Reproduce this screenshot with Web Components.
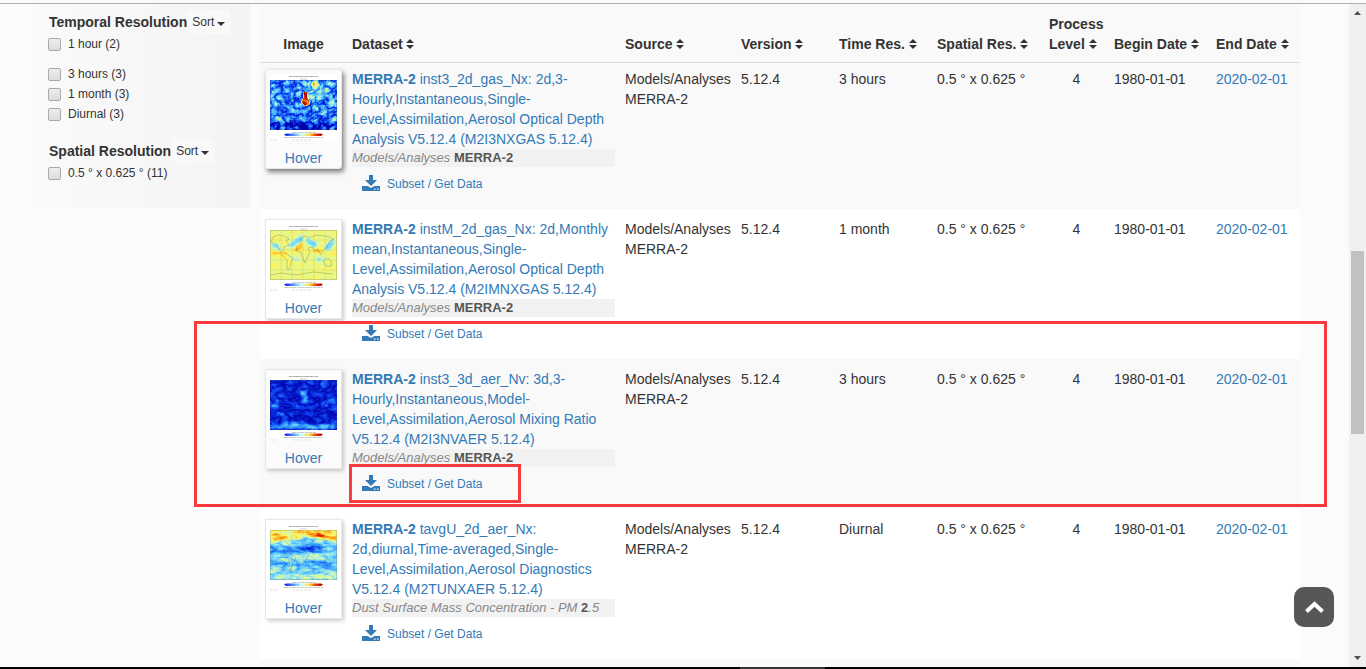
<!DOCTYPE html>
<html lang="en">
<head>
<meta charset="utf-8">
<title>Datasets</title>
<style>
  html, body {
    height: 100%;
    margin: 0;
  }
  body {
    font-family: "Liberation Sans", Arial, sans-serif;
    font-size: 14px;
    line-height: 20px;
    color: #333;
    background: #fbfbfb;
    overflow: hidden;
  }
</style>
</head>
<body>
<search-page>
  <facet-panel slot="side">
    <facet-group heading="Temporal Resolution">
      <facet-option class="picked" name="1 hour" count="2"></facet-option>
      <facet-option name="3 hours" count="3"></facet-option>
      <facet-option name="1 month" count="3"></facet-option>
      <facet-option name="Diurnal" count="3"></facet-option>
    </facet-group>
    <facet-group heading="Spatial Resolution">
      <facet-option name="0.5 ° x 0.625 °" count="11"></facet-option>
    </facet-group>
  </facet-panel>
  <dataset-table></dataset-table>
  <mark-box slot="over" style="--x: 194px; --y: 321px; --w: 1133px; --h: 186px"></mark-box>
  <mark-box slot="over" style="--x: 349px; --y: 464px; --w: 172px; --h: 39px"></mark-box>
  <top-button slot="over"></top-button>
</search-page>

<script>
function define(name, html, setup) {
  const template = document.createElement('template');
  template.innerHTML = html;
  customElements.define(name, class extends HTMLElement {
    constructor() {
      super();
      this.attachShadow({ mode: 'open' });
      this.shadowRoot.appendChild(template.content.cloneNode(true));
    }
    connectedCallback() {
      if (setup) setup(this.shadowRoot, this);
    }
  });
}

define('search-page', `
  <style>
    :host {
      display: flex;
      flex-direction: column;
      position: relative;
      box-sizing: border-box;
      height: 100vh;
      padding-top: 3px;
    }
    .view {
      display: flex;
      flex: 1;
      min-height: 0;
      border-top: 1px solid #acacac;
    }
    main {
      display: flex;
      flex: 1;
      gap: 10px;
      min-width: 0;
      padding: 0 49px 0 37px;
      overflow: hidden;
    }
    footer {
      display: flex;
      height: 2px;
      background: #000;
    }
    footer::before { content: ""; flex: 740; }
    footer::after { content: ""; flex: 541; }
    footer i { flex: 85; background: #333; }
  </style>
  <div class="view">
    <main>
      <slot name="side"></slot>
      <slot></slot>
    </main>
    <scroll-bar></scroll-bar>
  </div>
  <footer><i></i></footer>
  <slot name="over"></slot>
`);

define('scroll-bar', `
  <style>
    :host {
      display: flex;
      flex-direction: column;
      width: 17px;
      background: #f0f0f0;
    }
    svg { display: block; }
    .before { flex: 230; }
    .thumb { flex: 183; margin: 0 2px; background: #c1c1c1; }
    .after { flex: 216; }
  </style>
  <svg width="17" height="17"><path d="M5 11h7L8.500 7z" fill="#505050"/></svg>
  <div class="before"></div>
  <div class="thumb"></div>
  <div class="after"></div>
  <svg width="17" height="17"><path d="M5 6h7L8.500 10z" fill="#505050"/></svg>
`);

define('facet-panel', `
  <style>
    :host {
      display: flex;
      flex-direction: column;
      align-self: flex-start;
      flex: none;
      gap: 15px;
      box-sizing: border-box;
      width: 213px;
      padding: 6px 0 25px 11px;
      background: linear-gradient(to right, #fafafa, #f4f4f4);
    }
  </style>
  <slot></slot>
`);

define('facet-group', `
  <style>
    :host { display: block; }
    header {
      display: flex;
      align-items: center;
      height: 24px;
    }
    h4 {
      margin: 0;
      padding-left: 1px;
      font-size: 14px;
      line-height: 20px;
    }
    button {
      display: flex;
      align-items: center;
      gap: 3px;
      height: 24px;
      padding: 0 5px;
      border: 0;
      border-radius: 3px;
      background: #f9f9f9;
      color: #333;
      font: 12px/18px "Liberation Sans", Arial, sans-serif;
    }
    i {
      margin-top: 3px;
      border: 4px solid transparent;
      border-top-color: #333;
      border-bottom: 0;
    }
  </style>
  <header><h4></h4><button type="button">Sort<i></i></button></header>
  <slot></slot>
`, (root, el) => {
  root.querySelector('h4').textContent = el.getAttribute('heading');
});

define('facet-option', `
  <style>
    :host { display: block; }
    :host(.picked) { margin-bottom: 10px; }
    label {
      display: flex;
      align-items: center;
      gap: 7px;
      height: 20px;
      font-size: 12px;
    }
    input {
      appearance: none;
      width: 13px;
      height: 13px;
      margin: 0;
      border: 1px solid #a9a9a9;
      border-radius: 2px;
      background: linear-gradient(#eee, #dcdcdc);
    }
  </style>
  <label><input type="checkbox"><span></span></label>
`, (root, el) => {
  root.querySelector('span').textContent = el.getAttribute('name') + ' (' + el.getAttribute('count') + ')';
});

define('sort-icon', `
  <style>
    :host { display: inline-block; width: 8px; height: 10px; }
    svg { display: block; }
  </style>
  <svg width="8" height="10" fill="#333"><path d="M0 4L4 0l4 4zM0 6h8l-4 4z"/></svg>
`);

// Grey level = data value; the filter adds noise and maps it to the colour scale.
const maps = {
  gas: {
    noise: '.12 .14', gain: .8,
    art: `<rect width="67" height="50" fill="#282828"/>
      <g filter="url(#soft)">
        <path d="M33 5q8-5 19 0t3 13-19 2z" fill="#4c4c4c"/>
        <path d="M36 4q9-3 14 2t-3 9" fill="none" stroke="#727272" stroke-width="2"/>
        <path d="M17 10q6 1 5 12" fill="none" stroke="#606060" stroke-width="2"/>
        <path d="M0 43h67v8H0z" fill="#000"/>
      </g>
      <path d="M34 12l3 0 0 6 3 3-1 4-4 1-4-4 2-3z" fill="#d8d8d8" filter="url(#edge)"/>`,
    coast: ''
  },
  month: {
    noise: '.08 .2', gain: .12,
    art: `<rect width="67" height="50" fill="#929292"/>
      <g filter="url(#soft)">
        <path d="M17 16q8-7 14-11l3 5-13 8zM37 7l11 6-3 7-9-8zM54 18l7-9 5 2-8 11zM0 13l9 1 3 7-10-4z" fill="#606060"/>
        <path d="M22 21l10-9 2 5-9 6zM0 22h18v3H0zM40 21l7-3 8 2-8 3zM54 24l12-2v3z" fill="#b0b0b0"/>
        <path d="M20 27l11 1-4 3zM45 26l11 2-8 4z" fill="#686868"/>
      </g>`,
    coast: 'M3 7l5-2 6 1 5 3-3 2 3 4-5 2-1 4 5 4 5 3-2 5-2 7-2-1 0-9-4-4-4-7-3-5-5-2zM31 8l4-2 4 2 7-3 10 1 8 3-5 3-2 5-4 3-2 5-3-5-4 0-2-3-4 1 2 4-3 6-2 5-3-7-1-4-5-1 1-5 4-2zM53 31l5-3 4 4-1 4-5 0zM1 45l10-2 15 2 17-3 20 2'
  },
  aer: {
    noise: '.1 .16', gain: .35,
    art: `<rect width="67" height="50" fill="#0c0c0c"/>
      <g filter="url(#soft)">
        <path d="M28 9l8 4 2 7-7-3zM54 22l10-5 3 5zM0 24l9 0 0 3H0zM24 42l20 3 20-1v5H0l8-4z" fill="#404040"/>
        <path d="M33 19l4-1-2 5z" fill="#707070"/>
      </g>`,
    coast: ''
  },
  diurnal: {
    noise: '.07 .18', gain: .45,
    art: `<rect width="67" height="50" fill="#585858"/>
      <g filter="url(#soft)">
        <path d="M-2-2h71v12l-17-2-9-4-9 3-14 4-22 1z" fill="#949494"/>
        <path d="M34 2h15l10 4 8 0v5l-17-3-12-1z" fill="#c4c4c4"/>
        <path d="M2 5h15v3H2z" fill="#aaa"/>
        <path d="M0 15l16 2 14 0 14-2 10 2 3 4-14 3-16-1-27 1z" fill="#343434"/>
        <path d="M30 18l20-1 3 3-22 1z" fill="#080808"/>
        <path d="M21 24l14 2 11-1 10 3-9 2-15-2-10 1z" fill="#848484"/>
        <path d="M0 31l18 0 16 5 27 0v2l-31 0-30-4zM34 30h20l12 4-17 1z" fill="#3c3c3c"/>
        <path d="M0 46l18-3 21 2 28 0v5H0z" fill="#747474"/>
      </g>`,
    coast: 'M15 11l6 6 0 7 5 4-3 5-3 9-1-11-4-9M36 14l4 2-1 8-4 9M46 13l7 3-2 5M54 31l5-2 3 4-6 2'
  }
};

define('map-thumb', `
  <style>
    :host {
      display: block;
      box-sizing: border-box;
      padding: 4px 4px 0;
      border: 1px solid #e8e8e8;
      background: #fff;
      box-shadow: 2px 2px 4px rgba(0, 0, 0, .2);
    }
    :host([lit]) {
      border-radius: 3px;
      background: #fbfbfb;
      box-shadow: 2px 3px 5px rgba(0, 0, 0, .5);
    }
    :host([shade]) { background: #fbfbfb; }
    svg {
      display: block;
      width: 100%;
      margin-bottom: 7px;
    }
    a {
      display: block;
      color: #337ab7;
      text-align: center;
      text-decoration: none;
    }
  </style>
  <div class="art"></div>
  <a href="#">Hover</a>
`, (root, el) => {
  const map = maps[el.getAttribute('map')];
  root.querySelector('.art').innerHTML = `
    <svg viewBox="0 0 67 67">
      <defs>
        <filter id="soft"><feGaussianBlur stdDeviation="1"/></filter>
        <filter id="edge"><feGaussianBlur stdDeviation=".6"/></filter>
        <filter id="scale" x="0" y="0" width="1" height="1" color-interpolation-filters="sRGB">
          <feTurbulence type="turbulence" baseFrequency="${map.noise}" numOctaves="3" seed="7"/>
          <feColorMatrix values="${map.gain} 0 0 0 0 ${map.gain} 0 0 0 0 ${map.gain} 0 0 0 0 0 0 0 0 1" result="n"/>
          <feComposite in="SourceGraphic" in2="n" operator="arithmetic" k2="1" k3="1" k4="${-map.gain * .2}"/>
          <feComponentTransfer>
            <feFuncR type="table" tableValues="0 .05 .2 .45 .8 1 1 .9 .6"/>
            <feFuncG type="table" tableValues="0 .25 .6 .85 .98 .96 .6 .15 0"/>
            <feFuncB type="table" tableValues=".68 .95 1 1 .75 .35 .1 0 0"/>
            <feFuncA type="linear" slope="0" intercept="1"/>
          </feComponentTransfer>
        </filter>
        <linearGradient id="bar">
          <stop offset="0" stop-color="#11d"/>
          <stop offset=".25" stop-color="#59f"/>
          <stop offset=".45" stop-color="#cff"/>
          <stop offset=".65" stop-color="#fd3"/>
          <stop offset=".82" stop-color="#e31"/>
          <stop offset="1" stop-color="#900"/>
        </linearGradient>
      </defs>
      <rect width="67" height="67" fill="#fff"/>
      <path d="M19 2.500h29" stroke="#aaa" stroke-dasharray="3 .6 2 .4 4 .5"/>
      <path d="M30 5h7" stroke="#ccc"/>
      <svg x="0" y="6" width="67" height="50">
        <g filter="url(#scale)">${map.art}</g>
        <path d="${map.coast}" fill="none" stroke="#333" stroke-opacity=".45" stroke-width=".5"/>
        <path d="M11 0v50M22 0v50M33 0v50M44 0v50M55 0v50M0 10h67M0 20h67M0 30h67M0 40h67" stroke="#333" stroke-opacity=".2" stroke-width=".4"/>
        <rect width="67" height="50" fill="none" stroke="#444" stroke-opacity=".4"/>
      </svg>
      <path d="M22 58.500h24M14 63.500h39" stroke="#bbb" stroke-width=".8" stroke-dasharray="4 .6 3 .5"/>
      <path d="M14 60.500l2-1h35l2 1-2 1.500H16z" fill="url(#bar)"/>
      <path d="M0 66h7M22 66h19" stroke="#ddd" stroke-dasharray="3 1"/>
    </svg>`;
});

const columns = [
  ['Image', 87], ['Dataset', 273], ['Source', 116], ['Version', 98], ['Time Res.', 98],
  ['Spatial Res.', 112], ['Process Level', 65], ['Begin Date', 102], ['End Date', 89]
];

const note = '<em>Models/Analyses</em> <b>MERRA-2</b>';
const datasets = [
  { map: 'gas', flag: 'lit', time: '3 hours', note,
    title: 'inst3_2d_gas_Nx: 2d,3-Hourly,Instantaneous,Single-Level,Assimilation,Aerosol Optical Depth Analysis V5.12.4 (M2I3NXGAS 5.12.4)' },
  { map: 'month', flag: '', time: '1 month', note,
    title: 'instM_2d_gas_Nx: 2d,Monthly mean,Instantaneous,Single-Level,Assimilation,Aerosol Optical Depth Analysis V5.12.4 (M2IMNXGAS 5.12.4)' },
  { map: 'aer', flag: 'shade', time: '3 hours', note,
    title: 'inst3_3d_aer_Nv: 3d,3-Hourly,Instantaneous,Model-Level,Assimilation,Aerosol Mixing Ratio V5.12.4 (M2I3NVAER 5.12.4)' },
  { map: 'diurnal', flag: '', time: 'Diurnal', note: '<em>Dust Surface Mass Concentration - PM <b>2</b>.5</em>',
    title: 'tavgU_2d_aer_Nx: 2d,diurnal,Time-averaged,Single-Level,Assimilation,Aerosol Diagnostics V5.12.4 (M2TUNXAER 5.12.4)' }
];

define('dataset-table', `
  <style>
    :host {
      display: block;
      flex: 1;
      min-width: 0;
      background: #f9f9f9;
    }
    table {
      width: 100%;
      table-layout: fixed;
      border-spacing: 0;
    }
    th {
      padding: 10px 5px 8px;
      border-bottom: 1px solid #ddd;
      text-align: left;
      vertical-align: bottom;
    }
    th:first-child { text-align: center; }
    td {
      padding: 10px 5px 15px;
      vertical-align: top;
    }
    tr:first-child td { padding-top: 6px; }
    tr:nth-child(even) td { background: #fff; }
    td:nth-child(7) { text-align: center; }
    a {
      color: #337ab7;
      text-decoration: none;
    }
    .note {
      background: #f2f2f2;
      color: #888;
      font-size: 13px;
      line-height: 18px;
    }
    .note b {
      color: #555;
      font-style: normal;
    }
    .get {
      display: flex;
      align-items: center;
      gap: 7px;
      margin: 7px 0 0 10px;
      font-size: 12px;
    }
  </style>
  <table>
    <colgroup></colgroup>
    <thead></thead>
    <tbody></tbody>
  </table>
`, root => {
  root.querySelector('colgroup').innerHTML = columns.map(c => `<col style="width: ${c[1]}px">`).join('');
  root.querySelector('thead').innerHTML = '<tr>' + columns.map((c, i) =>
    `<th>${c[0]}${i ? ' <sort-icon></sort-icon>' : ''}</th>`).join('') + '</tr>';
  root.querySelector('tbody').innerHTML = datasets.map(d => `
    <tr>
      <td><map-thumb map="${d.map}" ${d.flag}></map-thumb></td>
      <td>
        <a href="#"><b>MERRA-2</b> ${d.title}</a>
        <div class="note">${d.note}</div>
        <a class="get" href="#">
          <svg width="18" height="18" fill="#337ab7">
            <path d="M7 0h4v5h4l-6 6-6-6h4z"/>
            <path fill-rule="evenodd" d="M0 11h5.500l3.500 2 3.500-2H18v5H0zM12 13.500v1.200h1.500v-1.200zM15 13.500v1.200h1.500v-1.200z"/>
          </svg>
          Subset / Get Data
        </a>
      </td>
      <td>Models/Analyses<br>MERRA-2</td>
      <td>5.12.4</td>
      <td>${d.time}</td>
      <td>0.5 ° x 0.625 °</td>
      <td>4</td>
      <td>1980-01-01</td>
      <td><a href="#">2020-02-01</a></td>
    </tr>`).join('');
});

define('mark-box', `
  <style>
    :host {
      position: absolute;
      left: var(--x);
      top: var(--y);
      box-sizing: border-box;
      width: var(--w);
      height: var(--h);
      border: 3px solid #fb3a3d;
      pointer-events: none;
    }
  </style>
`);

define('top-button', `
  <style>
    :host {
      position: absolute;
      right: 32px;
      bottom: 42px;
    }
    button {
      display: block;
      width: 40px;
      height: 40px;
      padding: 0;
      border: 0;
      border-radius: 10px;
      background: #575757;
    }
    svg { display: block; }
  </style>
  <button type="button" aria-label="Back to top">
    <svg width="40" height="40"><path d="M12.500 24.500l8-7.500 8 7.500" fill="none" stroke="#fff" stroke-width="4"/></svg>
  </button>
`);
</script>
</body>
</html>
